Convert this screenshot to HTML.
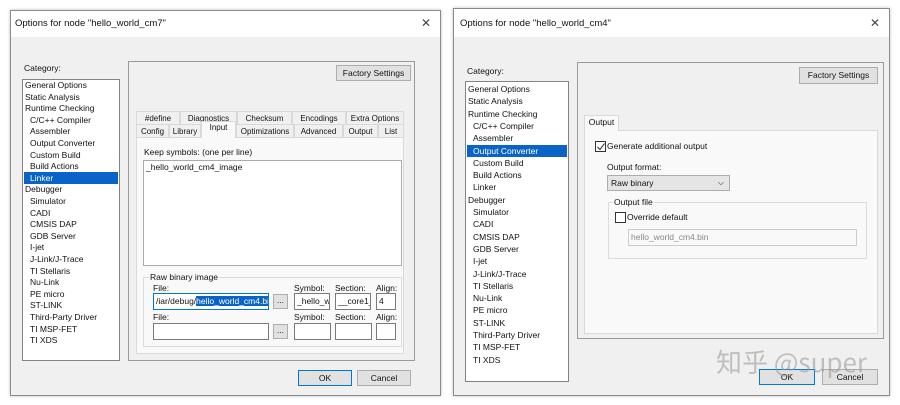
<!DOCTYPE html>
<html><head><meta charset="utf-8"><style>
*{box-sizing:border-box;margin:0;padding:0}
body{width:900px;height:405px;background:#fff;position:relative;overflow:hidden;font-family:"Liberation Sans","Noto Sans CJK SC",sans-serif;font-size:8.5px;color:#111}
.a{position:absolute}
.dlg{position:absolute;background:#f0f0f0;border:1px solid #8a8a8a;box-shadow:0 0 3px rgba(0,0,0,.25)}
.title{position:absolute;left:0;right:0;top:0;height:26px;background:#fff}
.title span{position:absolute;left:4px;top:7px;font-size:9.5px}
.x{position:absolute;right:9px;top:5px;font-size:12px;color:#444;font-weight:normal}
.list{position:absolute;background:#fff;border:1px solid #828282}
.it{position:absolute;left:2px;right:1px;height:12px;line-height:12px;padding-left:1px;white-space:nowrap}
.sel{background:#0a64c8;color:#fff}
.panel{position:absolute;border:1px solid #9a9a9a}
.btn{position:absolute;background:#e1e1e1;border:1px solid #adadad;text-align:center;line-height:14px;font-size:8.5px}
.tab{position:absolute;border:1px solid #d9d9d9;border-bottom:none;text-align:center;line-height:13px;background:#f0f0f0;white-space:nowrap;font-size:8px;overflow:hidden}
.inp{position:absolute;background:#fff;border:1px solid #7a7a7a;line-height:14px;padding-left:2px;white-space:nowrap;overflow:hidden}
.grp{position:absolute;border:1px solid #dcdcdc}
.chk{position:absolute;width:11px;height:11px;border:1px solid #333;background:#fff}
</style></head><body>

<div class="dlg" style="left:10px;top:10px;width:431px;height:386px">
 <div class="title"><span>Options for node "hello_world_cm7"</span><div class="x">✕</div></div>
</div>
<div class="a" style="left:24px;top:63px">Category:</div>
<div class="list" style="left:22px;top:79px;width:98px;height:282px"></div>
<div id="l1"></div>
<div class="panel" style="left:128px;top:61px;width:287px;height:300px"></div>
<div class="btn" style="left:336px;top:65px;width:75px;height:16px">Factory Settings</div>
<div class="tab" style="left:136px;top:111px;width:44px">#define</div>
<div class="tab" style="left:180px;top:111px;width:57px">Diagnostics</div>
<div class="tab" style="left:237px;top:111px;width:55px">Checksum</div>
<div class="tab" style="left:292px;top:111px;width:54px">Encodings</div>
<div class="tab" style="left:346px;top:111px;width:58px">Extra Options</div>
<div class="tab" style="left:136px;top:124px;width:33px">Config</div>
<div class="tab" style="left:169px;top:124px;width:32px">Library</div>
<div class="tab" style="left:236px;top:124px;width:58px">Optimizations</div>
<div class="tab" style="left:294px;top:124px;width:49px">Advanced</div>
<div class="tab" style="left:343px;top:124px;width:35px">Output</div>
<div class="tab" style="left:378px;top:124px;width:26px">List</div>
<div class="a" style="left:136px;top:137px;width:268px;height:217px;background:#f9f9f9;border:1px solid #d9d9d9"></div>
<div class="tab" style="left:201px;top:121px;width:35px;height:17px;background:#f9f9f9;line-height:11px">Input</div>
<div class="a" style="left:144px;top:147px">Keep symbols: (one per line)</div>
<div class="inp" style="left:143px;top:160px;width:259px;height:106px;line-height:13px;border-color:#aaa">_hello_world_cm4_image</div>
<div class="grp" style="left:143px;top:277px;width:259px;height:70px"></div>
<div class="a" style="left:149px;top:272px;background:#f9f9f9;padding:0 1px">Raw binary image</div>
<div class="a" style="left:153px;top:283px">File:</div>
<div class="a" style="left:294px;top:283px">Symbol:</div>
<div class="a" style="left:335px;top:283px">Section:</div>
<div class="a" style="left:376px;top:283px">Align:</div>
<div class="inp" style="left:153px;top:293px;width:116px;height:17px;border-color:#0078d7">/iar/debug/<span style="background:#0a64c8;color:#fff">hello_world_cm4.bin</span></div>
<div class="btn" style="left:273px;top:294px;width:15px;height:15px;line-height:10px">...</div>
<div class="inp" style="left:294px;top:293px;width:36px;height:17px">_hello_wo</div>
<div class="inp" style="left:335px;top:293px;width:36px;height:17px">__core1_</div>
<div class="inp" style="left:376px;top:293px;width:20px;height:17px">4</div>
<div class="a" style="left:153px;top:312px">File:</div>
<div class="a" style="left:294px;top:312px">Symbol:</div>
<div class="a" style="left:335px;top:312px">Section:</div>
<div class="a" style="left:376px;top:312px">Align:</div>
<div class="inp" style="left:153px;top:323px;width:116px;height:17px"></div>
<div class="btn" style="left:273px;top:324px;width:15px;height:15px;line-height:10px">...</div>
<div class="inp" style="left:294px;top:323px;width:37px;height:17px"></div>
<div class="inp" style="left:335px;top:323px;width:37px;height:17px"></div>
<div class="inp" style="left:376px;top:323px;width:20px;height:17px"></div>
<div class="btn" style="left:298px;top:370px;width:54px;height:16px;border-color:#0078d7">OK</div>
<div class="btn" style="left:357px;top:370px;width:54px;height:16px">Cancel</div>

<div class="dlg" style="left:453px;top:8px;width:437px;height:388px">
 <div class="title" style="height:28px"><span style="left:6px;top:9px">Options for node "hello_world_cm4"</span><div class="x" style="top:7px">✕</div></div>
</div>
<div class="a" style="left:467px;top:66px">Category:</div>
<div class="list" style="left:465px;top:81px;width:104px;height:301px"></div>
<div id="l2"></div>
<div class="panel" style="left:577px;top:62px;width:307px;height:277px"></div>
<div class="btn" style="left:799px;top:67px;width:79px;height:17px;line-height:15px">Factory Settings</div>
<div class="a" style="left:584px;top:130px;width:294px;height:204px;background:#f9f9f9;border:1px solid #d9d9d9"></div>
<div class="tab" style="left:584px;top:115px;width:35px;height:16px;background:#f9f9f9;font-size:8.5px">Output</div>
<div class="chk" style="left:595px;top:141px"></div>
<svg class="a" style="left:596px;top:142px" width="10" height="10"><path d="M1.5 5 L4 7.5 L8.5 1.5" stroke="#222" fill="none" stroke-width="1"/></svg>
<div class="a" style="left:607px;top:141px">Generate additional output</div>
<div class="a" style="left:607px;top:162px">Output format:</div>
<div class="a" style="left:607px;top:175px;width:123px;height:16px;background:#e5e5e5;border:1px solid #adadad;line-height:14px;padding-left:3px">Raw binary<span style="position:absolute;right:5px;top:0;font-size:8px">⌵</span></div>
<div class="grp" style="left:608px;top:202px;width:259px;height:57px"></div>
<div class="a" style="left:613px;top:197px;background:#f9f9f9;padding:0 1px">Output file</div>
<div class="chk" style="left:615px;top:212px"></div>
<div class="a" style="left:627px;top:212px">Override default</div>
<div class="a" style="left:628px;top:229px;width:229px;height:17px;border:1px solid #ccc;background:#f9f9f9;color:#888;line-height:15px;padding-left:2px">hello_world_cm4.bin</div>
<div class="btn" style="left:759px;top:369px;width:56px;height:16px;border-color:#0078d7">OK</div>
<div class="btn" style="left:822px;top:369px;width:56px;height:16px">Cancel</div>
<div class="a" style="left:716px;top:347px;font-size:26px;line-height:30px;color:rgba(150,150,150,.55);white-space:nowrap;font-family:'Noto Sans CJK SC','Liberation Sans',sans-serif">知乎 @super</div>

<script>
var items=["General Options","Static Analysis","Runtime Checking","C/C++ Compiler","Assembler","Output Converter","Custom Build","Build Actions","Linker","Debugger","Simulator","CADI","CMSIS DAP","GDB Server","I-jet","J-Link/J-Trace","TI Stellaris","Nu-Link","PE micro","ST-LINK","Third-Party Driver","TI MSP-FET","TI XDS"];
function mk(id,l,w,t0,step,sel){var h="";items.forEach(function(s,i){var ind=(i>=3&&i<=8)||i>=10;h+='<div class="it'+(i==sel?' sel':'')+'" style="left:'+l+'px;width:'+w+'px;top:'+(t0+i*step)+'px;padding-left:'+(ind?6:1)+'px;position:absolute">'+s+'</div>';});document.getElementById(id).innerHTML=h;}
mk("l1",24,94,79,11.6,8);
mk("l2",467,100,83,12.3,5);
</script>
</body></html>
